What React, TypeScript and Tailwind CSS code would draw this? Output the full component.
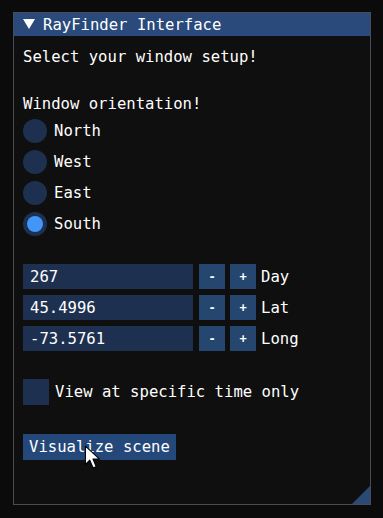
import React from "react";

const mono = { fontFamily: '"DejaVu Sans Mono", "Liberation Mono", monospace' };

function Radio({ label, checked }: { label: string; checked?: boolean }) {
  return (
    <div className="flex h-[24px] items-center">
      <div className="flex h-[24px] w-[24px] items-center justify-center rounded-full bg-[#1d3050]">
        {checked ? <div className="h-[16px] w-[16px] rounded-full bg-[#4296fa]" /> : null}
      </div>
      <span className="ml-[7px]">{label}</span>
    </div>
  );
}

function InputRow({ value, label }: { value: string; label: string }) {
  return (
    <div className="flex h-[25px] items-stretch">
      <div className="flex w-[170px] items-center bg-[#1d3050] pl-[7px]">{value}</div>
      <div className="ml-[6px] flex w-[26px] items-center justify-center bg-[#24466f] text-[12px] font-bold">
        -
      </div>
      <div className="ml-[5px] flex w-[26px] items-center justify-center bg-[#24466f] text-[12px] font-bold">
        +
      </div>
      <span className="ml-[5px] flex items-center">{label}</span>
    </div>
  );
}

export default function App() {
  return (
    <div className="h-[518px] w-[383px] overflow-hidden bg-[#0b0b0b] pl-[13px] pt-[12px]">
      <div
        className="relative flex h-[493px] w-[358px] flex-col border border-[#4b4b57] bg-[#0f0f0f] text-[15.6px] leading-[20px] text-white"
        style={mono}
      >
        <div className="flex h-[23px] items-center bg-[#294a7a] pl-[9px]">
          <svg width="12" height="11" viewBox="0 0 12 11" className="mr-[8px]">
            <polygon points="0,0 12,0 6,10" fill="#ffffff" />
          </svg>
          <span>RayFinder Interface</span>
        </div>

        <div className="flex flex-col px-[9px]">
          <div className="mt-[11px]">Select your window setup!</div>
          <div className="mt-[27px]">Window orientation!</div>

          <div className="mt-[5px] flex flex-col gap-[7px]">
            <Radio label="North" />
            <Radio label="West" />
            <Radio label="East" />
            <Radio label="South" checked />
          </div>

          <div className="mt-[28px] flex flex-col gap-[6px]">
            <InputRow value="267" label="Day" />
            <InputRow value="45.4996" label="Lat" />
            <InputRow value="-73.5761" label="Long" />
          </div>

          <div className="mt-[28px] flex h-[26px] items-center">
            <div className="h-[26px] w-[26px] bg-[#1d3050]" />
            <span className="ml-[6px]">View at specific time only</span>
          </div>

          <div className="mt-[29px] flex">
            <div className="flex h-[26px] items-center bg-[#24487a] px-[6px]">Visualize scene</div>
          </div>
        </div>

        <svg width="18" height="18" viewBox="0 0 18 18" className="absolute bottom-0 right-0">
          <polygon points="18,0 18,18 0,18" fill="#2a4a74" />
        </svg>

        <svg
          width="18"
          height="26"
          viewBox="0 0 16 24"
          className="absolute left-[70px] top-[432px]"
        >
          <path
            d="M1 1 L1 18 L5 14 L8 21 L11 20 L8 13 L14 13 Z"
            fill="#ffffff"
            stroke="#000000"
            strokeWidth="1"
            strokeLinejoin="round"
          />
        </svg>
      </div>
    </div>
  );
}
